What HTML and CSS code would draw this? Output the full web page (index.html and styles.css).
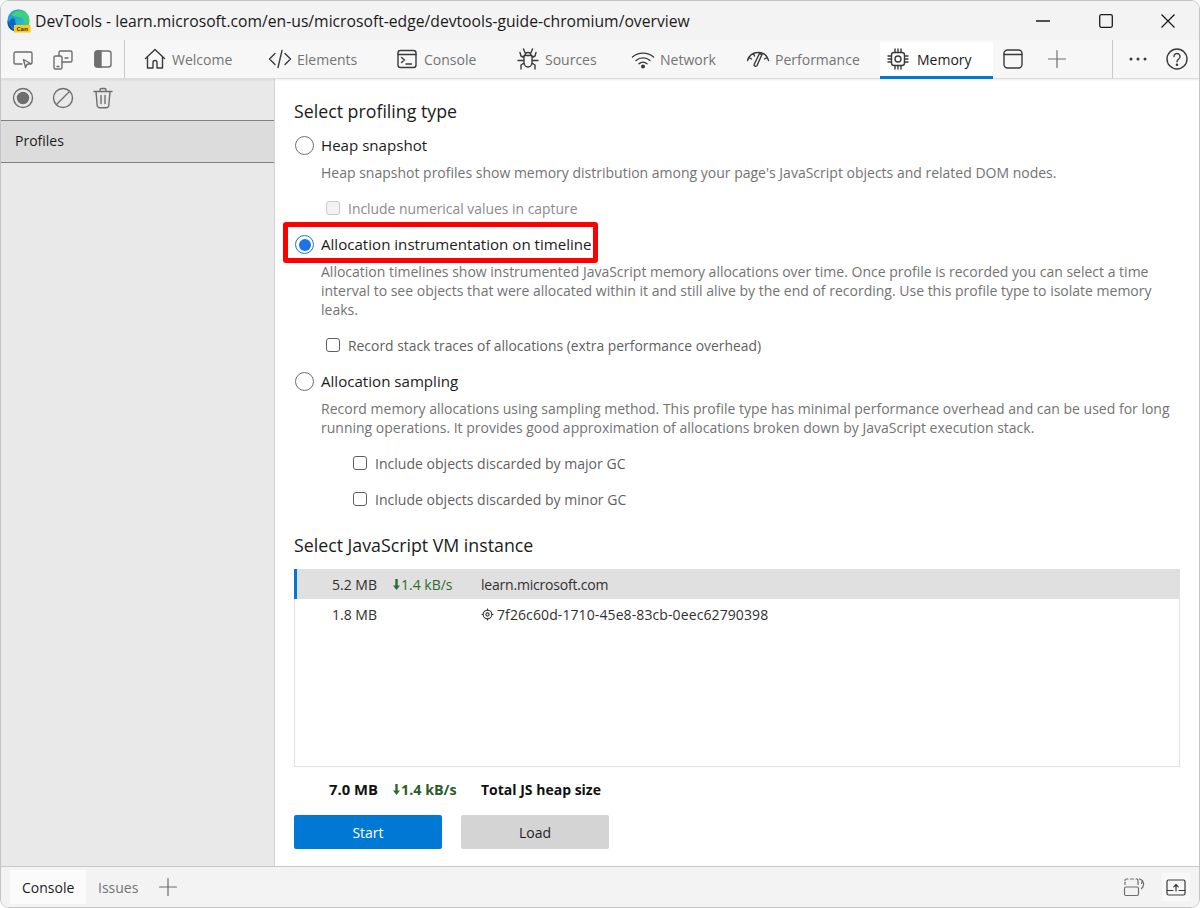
FILE: index.html
```html
<!DOCTYPE html>
<html lang="en">
<head>
<meta charset="utf-8">
<title>DevTools</title>
<link rel="stylesheet" href="styles.css">
</head>
<body>
<div class="window">
  <header class="titlebar">
    <svg class="edge" viewBox="0 0 24 24" width="24" height="24">
      <defs>
        <linearGradient id="eg" x1="0" y1="0" x2="1" y2="1"><stop offset="0" stop-color="#1a8fd8"/><stop offset=".6" stop-color="#22b8cf"/><stop offset="1" stop-color="#52d66a"/></linearGradient>
      </defs>
      <circle cx="11.5" cy="11.5" r="11" fill="url(#eg)"/>
      <path d="M4 6C7 .5 17 0 21 6c2.500 4 .5 8-4 8 1-3-1-6-5-6-3 0-6-1-8-2z" fill="#45cf7a"/>
      <path d="M1 11c1 5 5 10 11 11-6 2-12-3-11.500-9z" fill="#0a4fa8"/>
      <path d="M2 14c1-4 4-6 6-4 0 4 1 7 3 9-4 1-7-1-9-5z" fill="#0c63c7"/>
      <rect x="7" y="16" width="16.500" height="7.500" fill="#ffc913"/>
      <text x="15.200" y="22" class="canary">Can</text>
    </svg>
    <span class="title">DevTools - learn.microsoft.com/en-us/microsoft-edge/devtools-guide-chromium/overview</span>
    <div class="caption">
      <svg width="14" height="14" viewBox="0 0 14 14"><path d="M0 7h14" class="cap"/></svg>
      <svg width="14" height="14" viewBox="0 0 14 14"><rect x=".7" y=".7" width="12.600" height="12.600" rx="1.500" class="cap"/></svg>
      <svg width="14" height="14" viewBox="0 0 14 14"><path d="M.5.500l13 13M13.500.500l-13 13" class="cap"/></svg>
    </div>
  </header>

  <nav class="tabbar">
    <div class="tools">
      <button class="iconbtn"><svg width="24" height="24" viewBox="0 0 24 24" class="ic"><path d="M11 17H4.500A1.500 1.500 0 0 1 3 15.500v-9A1.500 1.500 0 0 1 4.500 5h15A1.500 1.500 0 0 1 21 6.500v9a1.500 1.500 0 0 1-1.500 1.500H19"/><path d="M12.500 12.500l2 8 1.500-3 3.500-1z"/></svg></button>
      <button class="iconbtn"><svg width="24" height="24" viewBox="0 0 24 24" class="ic"><rect x="3" y="9" width="8" height="13" rx="1.500"/><path d="M8 9V5.500A1.500 1.500 0 0 1 9.500 4h10A1.500 1.500 0 0 1 21 5.500v8a1.500 1.500 0 0 1-1.500 1.500H11M14 11h3M6 19.500h2"/></svg></button>
      <button class="iconbtn"><svg width="24" height="24" viewBox="0 0 24 24" class="ic"><rect x="4" y="4" width="16" height="16" rx="2.500"/><path d="M6.500 4H10v16H6.500A2.500 2.500 0 0 1 4 17.500v-11A2.500 2.500 0 0 1 6.500 4z" class="fillgrey"/></svg></button>
    </div>
    <div class="tab t-welcome"><svg width="24" height="24" viewBox="0 0 24 24" class="ic dark"><path d="M2.500 11.500L12 2.500l9.500 9M4.500 9.500v11.500H10V15.500a2 2 0 0 1 4 0V21h5.500V9.500"/></svg><span>Welcome</span></div>
    <div class="tab t-elements"><svg width="24" height="24" viewBox="0 0 24 24" class="ic dark"><path d="M7 6.500L1.500 12 7 17.500M17 6.500l5.500 5.500-5.500 5.500M14 3.500L10 20.500"/></svg><span>Elements</span></div>
    <div class="tab t-console"><svg width="24" height="24" viewBox="0 0 24 24" class="ic dark"><rect x="3" y="3.500" width="18" height="17" rx="2.500"/><path d="M3 7.500h18M6.500 10.500l3 2.500-3 2.500M11 17h5.500"/></svg><span>Console</span></div>
    <div class="tab t-sources"><svg width="24" height="24" viewBox="0 0 24 24" class="ic dark"><path d="M8 8.500h8V15a4 5 0 0 1-8 0zM9 8.500a3 3 0 0 1 6 0M9 5.500L7.500 2M15 5.500L16.500 2M8 10.500L5 9 4 5.500M16 10.500l3-1.500 1-3.500M8 13.500H2M16 13.500h6M8 16l-3 2v4M16 16l3 2v4"/></svg><span>Sources</span></div>
    <div class="tab t-network"><svg width="24" height="24" viewBox="0 0 24 24" class="ic dark"><path d="M1.500 10c5.800-5.200 15.200-5.200 21 0M5 13.500c4-3.500 10-3.500 14 0M8 16.800c2.300-2 5.700-2 8 0"/><circle cx="12" cy="19.500" r="1.300" class="dot"/></svg><span>Network</span></div>
    <div class="tab t-perf"><svg width="24" height="24" viewBox="0 0 24 24" class="ic dark"><path d="M1.500 13.500C3 8.500 7 5.500 12 5.500s9 3 10.500 8M3 10.500l2.500 1.500M7.500 6.500L8.500 9M21 10.500L18.500 12"/><path d="M16 7.500l-5 11c-.8 1.500-3.500.5-2.800-1.200L13.500 6.500z"/></svg><span>Performance</span></div>
    <div class="tab active"><svg width="24" height="24" viewBox="0 0 24 24" class="ic dark"><rect x="5.500" y="5.500" width="13" height="13" rx="2.500"/><circle cx="12" cy="12" r="3"/><path d="M2 9h3.500M2 12h3.500M2 15h3.500M18.500 9H22M18.500 12H22M18.500 15H22M9 2v3.500M12 2v3.500M15 2v3.500M9 18.500V22M12 18.500V22M15 18.500V22"/></svg><span>Memory</span></div>
    <svg class="ic dark t-panel" width="24" height="24" viewBox="0 0 24 24"><rect x="3" y="3" width="18" height="18" rx="3.500"/><path d="M3 7.500h18"/></svg>
    <svg class="ic plus" width="24" height="24" viewBox="0 0 24 24"><path d="M12 3.500v17M3.500 12h17"/></svg>
    <div class="tab-right">
      <svg width="24" height="24" viewBox="0 0 24 24" class="more"><circle cx="5" cy="12" r="1.500"/><circle cx="12" cy="12" r="1.500"/><circle cx="19" cy="12" r="1.500"/></svg>
      <svg width="24" height="24" viewBox="0 0 24 24" class="ic dark"><circle cx="12" cy="12" r="10"/><path d="M9 9.500a3 3 0 1 1 4.700 2.500c-1.100.8-1.700 1.400-1.700 2.800"/><circle cx="12" cy="17.800" r=".6"/></svg>
    </div>
  </nav>

  <div class="main">
    <aside class="sidebar">
      <div class="side-tools">
        <svg width="24" height="24" viewBox="0 0 24 24" class="ic"><circle cx="12" cy="12" r="9.500"/><circle cx="12" cy="12" r="5.500" class="fillgrey"/></svg>
        <svg width="24" height="24" viewBox="0 0 24 24" class="ic"><circle cx="12" cy="12" r="9.500"/><path d="M5.500 18.500l13-13"/></svg>
        <svg width="24" height="24" viewBox="0 0 24 24" class="ic"><path d="M3 5.500h18M9 5.500V4a1.500 1.500 0 0 1 1.500-1.500h3A1.500 1.500 0 0 1 15 4v1.500M5 5.500l1.200 14a2.500 2.500 0 0 0 2.500 2.200h6.600a2.500 2.500 0 0 0 2.500-2.200L19 5.500M10 9.500v8M14 9.500v8"/></svg>
      </div>
      <div class="side-item">Profiles</div>
    </aside>

    <section class="content">
      <h2 class="h-first">Select profiling type</h2>

      <label class="radio-row"><span class="radio"></span>Heap snapshot</label>
      <p class="desc">Heap snapshot profiles show memory distribution among your page's JavaScript objects and related DOM nodes.</p>
      <label class="check-row dim"><span class="check disabled"></span>Include numerical values in capture</label>

      <label class="radio-row"><span class="radio on"></span>Allocation instrumentation on timeline<span class="redbox"></span></label>
      <p class="desc">Allocation timelines show instrumented JavaScript memory allocations over time. Once profile is recorded you can select a time interval to see objects that were allocated within it and still alive by the end of recording. Use this profile type to isolate memory leaks.</p>
      <label class="check-row"><span class="check"></span>Record stack traces of allocations (extra performance overhead)</label>

      <label class="radio-row"><span class="radio"></span>Allocation sampling</label>
      <p class="desc">Record memory allocations using sampling method. This profile type has minimal performance overhead and can be used for long running operations. It provides good approximation of allocations broken down by JavaScript execution stack.</p>
      <label class="check-row deep"><span class="check"></span>Include objects discarded by major GC</label>
      <label class="check-row deep"><span class="check"></span>Include objects discarded by minor GC</label>

      <h2 class="h-vm">Select JavaScript VM instance</h2>
      <div class="vmlist">
        <div class="vmrow selected"><span class="c-size">5.2 MB</span><span class="c-rate"><svg class="arrow" width="7" height="11" viewBox="0 0 7 11"><path d="M2.300 0h2.400v6.500H7L3.500 11 0 6.500h2.300z"/></svg>1.4 kB/s</span><span class="c-name tight">learn.microsoft.com</span></div>
        <div class="vmrow"><span class="c-size">1.8 MB</span><span class="c-rate"></span><span class="c-name wide"><svg class="gear" width="13" height="13" viewBox="0 0 24 24"><circle cx="12" cy="12" r="8"/><circle cx="12" cy="12" r="3"/><path d="M12 1v3M12 20v3M1 12h3M20 12h3"/></svg>7f26c60d-1710-45e8-83cb-0eec62790398</span></div>
      </div>
      <div class="vmrow total"><span class="c-size">7.0 MB</span><span class="c-rate"><svg class="arrow" width="7" height="11" viewBox="0 0 7 11"><path d="M2.300 0h2.400v6.500H7L3.500 11 0 6.500h2.300z"/></svg>1.4 kB/s</span><span class="c-name">Total JS heap size</span></div>
      <div class="buttons">
        <button class="btn primary">Start</button>
        <button class="btn secondary">Load</button>
      </div>
    </section>
  </div>

  <footer class="drawer">
    <div class="drawer-tab active-d">Console</div>
    <div class="drawer-tab">Issues</div>
    <svg class="ic plus" width="24" height="24" viewBox="0 0 24 24"><path d="M12 3.500v17M3.500 12h17"/></svg>
    <div class="drawer-right">
      <svg width="24" height="24" viewBox="0 0 24 24" class="ic thin"><rect x="2.500" y="12" width="14" height="8.500" rx="1.500"/><path d="M3 9.500V7M3 5.500A1.500 1.500 0 0 1 4.500 4H6M8.500 4h3M14 4a1.500 1.500 0 0 1 2 1.500v4M20 5.500c2 2 2.500 5-.5 8M17.500 4l3 1.500-1 3"/></svg>
      <span class="dock"><svg width="24" height="24" viewBox="0 0 24 24" class="ic dark thin"><rect x="3" y="5" width="18" height="15" rx="1.500"/><path d="M3 15.500h6M15 15.500h6M12 16V9.500M9.800 11.800L12 9.500l2.200 2.300"/></svg></span>
    </div>
  </footer>
</div>
</body>
</html>
```

FILE: styles.css
```css
* { box-sizing: border-box; }
html, body { margin: 0; padding: 0; background: #fff; }
body { font-family: "Open Sans", "Noto Sans", sans-serif; color: #1b1b1b; }
button { font: inherit; border: 0; padding: 0; background: none; }
svg { display: block; flex: none; }

.window {
  width: 1200px; height: 908px; display: flex; flex-direction: column; overflow: hidden;
  border: 1px solid #c4c4c4; border-radius: 9px; background: #fff;
}

.titlebar { height: 39px; flex: none; background: #f3f3f3; display: flex; align-items: center; padding-left: 6px; }
.edge { margin-top: 1px; }
.canary { font-size: 6px; font-weight: 700; fill: #333; text-anchor: middle; }
.title { margin-left: 4px; font-size: 15.700px; color: #1a1a1a; white-space: nowrap; }
.caption { margin-left: auto; display: flex; gap: 48.500px; padding-right: 24px; }
.cap { fill: none; stroke: #1a1a1a; stroke-width: 1.300; }

.tabbar { height: 39px; flex: none; background: #f7f7f7; display: flex; align-items: center; border-bottom: 1px solid #dcdcdc; box-shadow: 0 1px 2px rgba(0,0,0,.08); position: relative; z-index: 1; font-size: 14px; color: #747474; }
.tools { display: flex; gap: 16px; padding-left: 10px; width: 124px; height: 100%; align-items: center; border-right: 1px solid #c9c9c9; flex: none; margin-right: 18px; }
.iconbtn { width: 24px; height: 24px; }
.ic { fill: none; stroke: #6e6e6e; stroke-width: 1.400; stroke-linecap: round; stroke-linejoin: round; }
.ic.dark { stroke: #3a3a3a; }
.ic.thin { stroke-width: 1.200; }
.ic .fillgrey { fill: #6e6e6e; stroke: #6e6e6e; }
.ic .dot { fill: #3a3a3a; }
.more { fill: #3a3a3a; }

.tab { display: flex; align-items: center; gap: 5px; height: 100%; flex: none; white-space: nowrap; }
.t-welcome { width: 125px; }
.t-elements { width: 127px; }
.t-console { width: 121px; }
.t-sources { width: 115px; }
.t-network { width: 115px; }
.t-perf { width: 134px; }
.tab.active { width: 113px; height: 37px; margin-top: 3px; padding: 0 0 0 6px; background: #fff; border-bottom: 3px solid #0078d4; color: #1b1b1b; border-radius: 2px 2px 0 0; gap: 7px; }
.t-panel { margin-left: 8px; }
.tabbar > .plus { margin-left: 20px; }
.plus { stroke: #6e6e6e; stroke-width: 1.200; }
.tab-right { margin-left: auto; display: flex; align-items: center; gap: 15px; height: 100%; border-left: 1px solid #c9c9c9; padding: 0 0 0 13px; width: 87px; }

.main { flex: 1; display: flex; min-height: 0; }
.sidebar { width: 274px; flex: none; background: #e9e9e9; border-right: 1px solid #d4d4d4; }
.side-tools { height: 42px; display: flex; align-items: center; gap: 16px; padding: 0 0 3px 10px; border-bottom: 1px solid #7f7f7f; }
.side-item { height: 42px; background: #dcdcdc; border-bottom: 1px solid #7f7f7f; display: flex; align-items: center; padding: 0 0 3px 14px; font-size: 14px; color: #1b1b1b; }

.content { flex: 1; padding: 20px 19px 0 19px; min-width: 0; font-size: 14px; }
h2 { font-size: 17.750px; font-weight: 400; margin: 0; line-height: 24px; color: #1b1b1b; }
.h-vm { margin-top: 24px; }
.radio-row { display: flex; align-items: center; gap: 7px; height: 20px; margin-top: 16px; padding-left: 1px; font-size: 15.100px; position: relative; }
.h-first + .radio-row { margin-top: 12px; }
.radio { width: 19px; height: 19px; border-radius: 50%; border: 1.500px solid #6f6f6f; background: #fff; flex: none; }
.radio.on { border-color: #1a73e8; padding: 2.500px; background: #1a73e8 content-box; }
.redbox { position: absolute; left: -11px; top: -12px; width: 315px; height: 41px; border: 5px solid #f00; border-radius: 3px; pointer-events: none; }
.desc { margin: 8px 0 0 27px; font-size: 14px; line-height: 19px; color: #737373; }
.check-row { display: flex; align-items: center; gap: 8px; height: 20px; margin: 16px 0 0 32px; color: #5f5f5f; font-size: 13.900px; }
.check-row.dim { color: #8a8a8a; }
.check-row.deep { margin-left: 59px; font-size: 14.050px; }
.check { width: 14px; height: 14px; border: 1.300px solid #5f5f5f; border-radius: 3px; flex: none; background: #fff; }
.check.disabled { border-color: #c8c8c8; background: #f3f3f3; }

.vmlist { height: 198px; margin-top: 12px; border: 1px solid #e0e0e0; border-top: 0; }
.vmrow { height: 30px; display: flex; align-items: center; font-size: 14px; color: #303030; }
.vmrow.selected { background: #e0e0e0; border-left: 3px solid #0078d4; margin-left: -1px; }
.vmrow.selected .c-size { width: 80px; }
.c-size { width: 82px; text-align: right; flex: none; }
.c-rate { width: 104px; flex: none; padding-left: 16px; color: #2e6b2e; white-space: nowrap; display: flex; align-items: center; gap: 1px; }
.arrow { fill: #2e6b2e; }
.c-name { display: flex; align-items: center; gap: 3px; white-space: nowrap; }
.tight { letter-spacing: -.2px; }
.wide { letter-spacing: .1px; }
.gear { fill: none; stroke: #333; stroke-width: 2; }
.total { font-weight: 700; margin-top: 7px; height: 30px; color: #111; }
.total .c-size { width: 84px; font-size: 14.800px; }
.total .c-rate { color: #2b5e2b; width: 103px; padding-left: 15px; font-size: 14.300px; }
.buttons { display: flex; gap: 19px; margin-top: 11px; }
.btn { width: 148px; height: 34px; border-radius: 2px; font-size: 14px; }
.primary { background: #0078d4; color: #fff; }
.secondary { background: #d4d4d4; color: #1f1f1f; }

.drawer { height: 41px; flex: none; background: #f3f3f3; border-top: 1px solid #c8c8c8; display: flex; align-items: center; padding-left: 9px; font-size: 14px; color: #747474; }
.drawer-tab { height: 34px; display: flex; align-items: center; padding: 0 12px; }
.drawer-tab + .drawer-tab { padding: 0 0 0 12px; width: 59px; }
.drawer > .plus { margin-left: 11px; }
.active-d { background: #fbfbfb; color: #1b1b1b; border-radius: 2px; width: 76px; }
.drawer-right { margin-left: auto; display: flex; align-items: center; gap: 16px; padding-right: 9px; }
.dock { display: block; padding: 2px; background: #f8f8f8; }
```
